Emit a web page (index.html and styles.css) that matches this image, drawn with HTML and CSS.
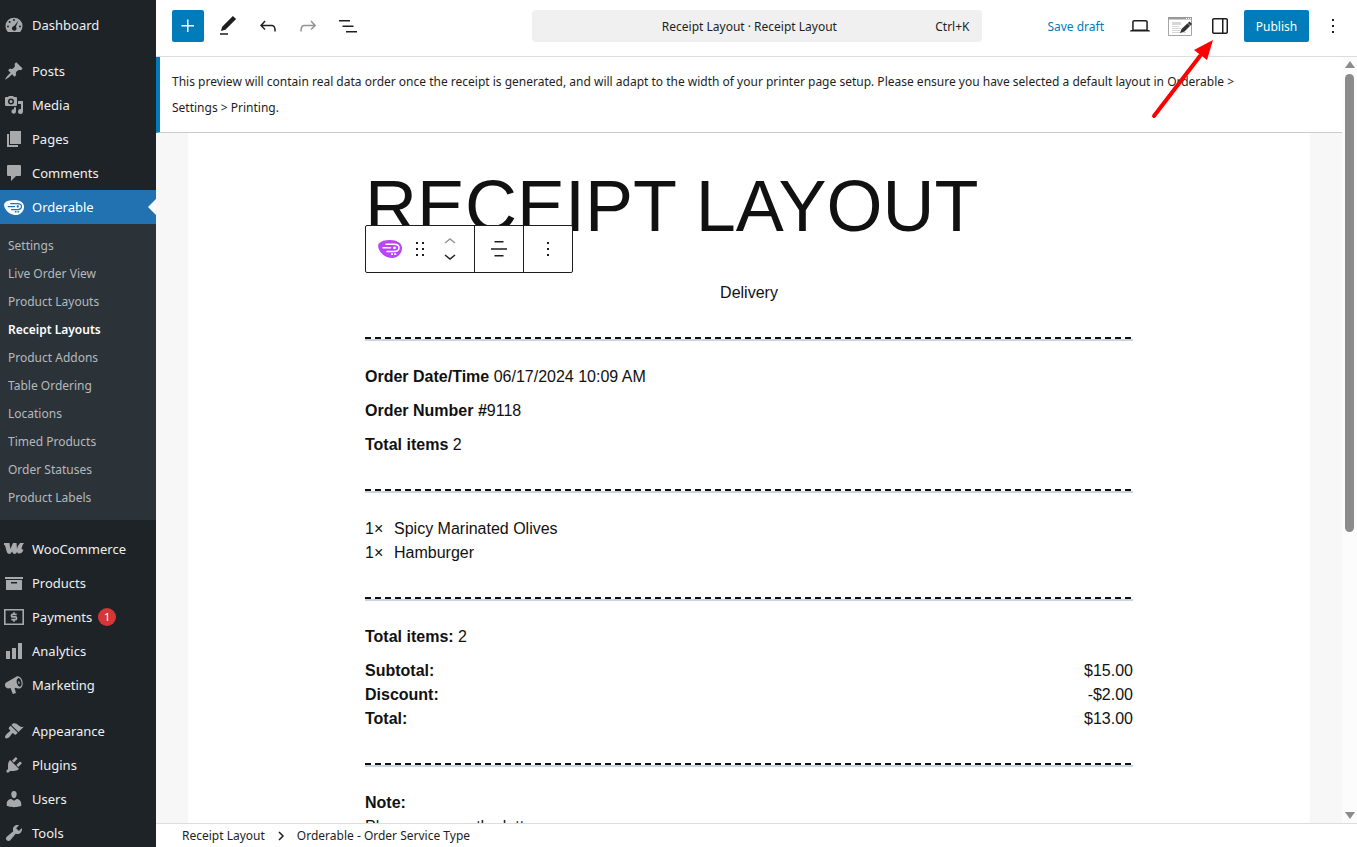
FILE: index.html
```
<!DOCTYPE html>
<html lang="en">
<head>
    <meta charset="UTF-8">
    <meta name="viewport" content="width=device-width, initial-scale=1.0">
    <title>Receipt Layout</title>
    <link rel="stylesheet" href="styles.css">
</head>
<body>
    <svg class="sprite" aria-hidden="true">
        <symbol id="logo" viewBox="0 0 24 18">
            <path fill="currentColor" d="M.8 3.500C3 1 7 0 12 0c7 0 12 3 12 8 0 6-5 10-9.500 10C9 18 4 15 1.500 10.500 0 8-.3 5 .8 3.500z"/>
            <path class="logo-line" fill="none" stroke-width="1.500" stroke-linecap="round" d="M8 4.200h8c3 0 5 1.400 5 3.600s-2 3.700-5 3.700H9M5 7.800h7.500"/>
            <circle class="logo-dot" cx="16.500" cy="7.800" r="1.400"/>
            <path class="logo-dot" d="M13 13.300h2V15h-2zM16.200 13.300h2V15h-2z"/>
        </symbol>
    </svg>
    <div class="admin">
        <nav class="sidebar">
            <a class="menu-item" href="#"><svg class="menu-icon" viewBox="0 0 20 20"><path fill-rule="evenodd" d="M3.800 17h12.400a8.500 8.500 0 1 0-12.400 0zM10 4a1 1 0 1 1 0 2 1 1 0 0 1 0-2zM5.600 6a1 1 0 1 1 0 2 1 1 0 0 1 0-2zM4 10.400a1 1 0 1 1 0 2 1 1 0 0 1 0-2zM16 10.400a1 1 0 1 1 0 2 1 1 0 0 1 0-2zM14.500 5.500l-2.600 6.300a2.300 2.300 0 1 1-1.700-.7z"/></svg>Dashboard</a>
            <div class="menu-gap"></div>
            <a class="menu-item" href="#"><svg class="menu-icon" viewBox="0 0 20 20"><path d="M10.440 3.020l1.820-1.820 6.360 6.350-1.830 1.820c-1.050-.68-2.480-.57-3.410.36l-.75.750c-.92.930-1.040 2.350-.35 3.410l-1.830 1.820-2.410-2.410-2.800 2.790c-.42.420-3.380 2.710-3.800 2.290s1.860-3.390 2.280-3.810l2.790-2.790L4.100 9.360l1.830-1.820c1.050.69 2.480.57 3.400-.36l.75-.75c.93-.92 1.050-2.350.36-3.410z"/></svg>Posts</a>
            <a class="menu-item" href="#"><svg class="menu-icon" viewBox="0 0 20 20"><path fill-rule="evenodd" d="M2 2h2l1-1h4l1 1h2q1 0 1 1v7q0 1-1 1H2q-1 0-1-1V3q0-1 1-1zM7 3.500a3 3 0 1 0 0 6 3 3 0 0 0 0-6zM7 5a1.500 1.500 0 1 1 0 3 1.500 1.500 0 0 1 0-3zM14 6h5v10.500a2.500 2.500 0 1 1-2-2.450V9h-3zM10 12.200h2v4.300a2.300 2.300 0 1 1-2-2.300z"/></svg>Media</a>
            <a class="menu-item" href="#"><svg class="menu-icon" viewBox="0 0 20 20"><path d="M6 2h11v13H6zM3 5h2v11h9v2H3z"/></svg>Pages</a>
            <a class="menu-item" href="#"><svg class="menu-icon" viewBox="0 0 20 20"><path d="M4 2h12q1 0 1 1v9q0 1-1 1h-4l-5 5v-5H4q-1 0-1-1V3q0-1 1-1z"/></svg>Comments</a>
            <a class="menu-item current" href="#"><svg class="menu-logo"><use href="#logo"/></svg>Orderable</a>
            <div class="submenu">
                <a href="#">Settings</a>
                <a href="#">Live Order View</a>
                <a href="#">Product Layouts</a>
                <a class="active" href="#">Receipt Layouts</a>
                <a href="#">Product Addons</a>
                <a href="#">Table Ordering</a>
                <a href="#">Locations</a>
                <a href="#">Timed Products</a>
                <a href="#">Order Statuses</a>
                <a href="#">Product Labels</a>
            </div>
            <div class="menu-gap"></div>
            <a class="menu-item" href="#"><svg class="menu-icon" viewBox="0 0 20 20"><path d="M0 4h5.500l.8 6L9 4h3.500l.5 6q1-4 3-6h4q-2 2-2.500 5.500.5 1.500 2 1-1 4-4.500 4-1.500 0-2-1.500-.8 2-2.500 2-1.800 0-2.300-2.500Q6.500 15 5 15q-1.800 0-2.500-3L1.200 7Q1 6 0 6z"/></svg>WooCommerce</a>
            <a class="menu-item" href="#"><svg class="menu-icon" viewBox="0 0 20 20"><path fill-rule="evenodd" d="M1 4h18v2H1zM2 7h16v10H2zM7 9v1.500h6V9z"/></svg>Products</a>
            <a class="menu-item" href="#"><svg class="menu-icon" viewBox="0 0 20 20"><path fill="none" stroke="currentColor" stroke-width="1.600" d="M.8 2.800h18.400v14.400H.8z"/><path fill="none" stroke="currentColor" stroke-width="1.700" d="M12.700 7.300H8.500q-1 0-1 1v.6q0 1 1 1h3q1 0 1 1v.7q0 1-1 1H7.300M10 5.200v2M10 12.800v2"/></svg>Payments<span class="count">1</span></a>
            <a class="menu-item" href="#"><svg class="menu-icon" viewBox="0 0 20 20"><path d="M2 10h4v8H2zM8 7h4v11H8zM14 2h4v16h-4z"/></svg>Analytics</a>
            <a class="menu-item" href="#"><svg class="menu-icon" viewBox="0 0 20 20"><path fill-rule="evenodd" d="M11 2.500C13 .5 16 .8 17.700 4.200c2 4.300.8 8.800-2.200 9.300-1 .2-3-.6-5-.8L12 18l-3.200 1-2.300-6C3.500 14 2 13 1.300 11.500.5 9.500 1 8 3 7zM14.500 3c-1.800.5-2.300 3-1.500 5.500.7 2.300 2 3.500 3.300 3.100 1.400-.5 1.700-3 .9-5.300-.6-2.200-1.600-3.500-2.700-3.300zM14 6q1.800 0 1.800 2.800L14.500 9z"/></svg>Marketing</a>
            <div class="menu-gap"></div>
            <a class="menu-item" href="#"><svg class="menu-icon" viewBox="0 0 20 20"><path d="M14.480 11.060L7.410 3.990l1.500-1.500c.5-.56 2.300-.47 3.510.32 1.210.8 1.430 1.280 2.910 2.100 1.180.64 2.450 1.260 4.450.85zm-.71.710L6.700 4.700 4.930 6.470c-.39.390-.39 1.020 0 1.410l1.060 1.060c.39.390.39 1.030 0 1.420-.6.600-1.430 1.110-2.210 1.690-.35.260-.7.530-1.010.840C1.430 14.230.4 16.080 1.400 17.070c.99 1 2.840-.03 4.180-1.360.31-.31.580-.66.850-1.020.57-.78 1.080-1.610 1.690-2.210.39-.39 1.020-.39 1.410 0l1.060 1.060c.39.390 1.020.39 1.410 0z"/></svg>Appearance</a>
            <a class="menu-item" href="#"><svg class="menu-icon" viewBox="0 0 20 20"><path d="M13.110 4.360L9.870 7.600 8 5.730l3.240-3.240c.35-.34 1.050-.2 1.560.32.520.51.660 1.210.31 1.550zm-8 1.770l.91-1.120 9.010 9.010-1.190.84c-.71.710-2.630 1.160-3.820 1.160H6.140L4.900 17.260c-.59.590-1.540.59-2.120 0-.59-.58-.59-1.530 0-2.120l1.240-1.240v-3.880c0-1.130.4-3.190 1.090-3.890zm7.260 3.970l3.240-3.240c.34-.35 1.040-.21 1.550.31.520.51.660 1.210.31 1.550l-3.240 3.250z"/></svg>Plugins</a>
            <a class="menu-item" href="#"><svg class="menu-icon" viewBox="0 0 20 20"><path d="M10 9.250c-2.270 0-2.730-3.440-2.730-3.440C7 4.020 7.820 2 9.970 2c2.160 0 2.980 2.020 2.710 3.810 0 0-.41 3.440-2.680 3.440zm0 2.570L12.720 10c2.390 0 4.520 2.330 4.520 4.530v2.490s-3.650 1.130-7.240 1.130c-3.650 0-7.240-1.130-7.240-1.130v-2.490c0-2.250 1.940-4.480 4.470-4.480z"/></svg>Users</a>
            <a class="menu-item" href="#"><svg class="menu-icon" viewBox="0 0 20 20"><path d="M16.680 9.770c-1.340 1.340-3.300 1.670-4.950.99l-5.410 6.520c-.99.990-2.590.99-3.580 0s-.99-2.590 0-3.570l6.520-5.420c-.68-1.650-.35-3.610.99-4.950 1.280-1.280 3.120-1.620 4.720-1.060l-2.890 2.890 2.820 2.820 2.860-2.870c.53 1.580.18 3.390-1.080 4.650z"/></svg>Tools</a>
        </nav>

        <div class="editor">
            <header class="topbar">
                <div class="tools">
                    <button class="tool add" aria-label="Add block"><svg viewBox="0 0 24 24"><path d="M11 12.500V18h1.500v-5.500H18V11h-5.500V5.500H11V11H5.500v1.500z"/></svg></button>
                    <button class="tool" aria-label="Edit"><svg viewBox="0 0 24 24"><path d="M20.100 5.100L16.900 2 6.200 12.700l-1.300 4.400 4.500-1.300L20.100 5.100zM4 20.800h8v-1.500H4v1.500z"/></svg></button>
                    <button class="tool" aria-label="Undo"><svg viewBox="0 0 24 24"><path d="M18.300 11.700c-.6-.6-1.400-.9-2.300-.9H6.700l2.900-3.300-1.100-1-4.500 5L8.500 16l1-1-2.700-2.700H16c.5 0 .9.200 1.300.5 1 1 1 3.400 1 4.500v.3h1.500v-.2c0-1.500 0-4.300-1.500-5.700z"/></svg></button>
                    <button class="tool" aria-label="Redo" disabled><svg viewBox="0 0 24 24"><path d="M15.600 6.500l-1.100 1 2.900 3.300H8c-.9 0-1.700.3-2.300.9-1.400 1.500-1.400 4.200-1.400 5.600v.2h1.500v-.3c0-1.100 0-3.500 1-4.500.3-.3.700-.5 1.300-.5h9.200L14.500 15l1.100 1.100 4.600-4.600-4.600-5z"/></svg></button>
                    <button class="tool" aria-label="Document overview"><svg viewBox="0 0 24 24"><path d="M3 6h11v1.500H3V6zm3.500 5.500h11V13h-11v-1.500zM21 17H10v1.500h11V17z"/></svg></button>
                </div>
                <button class="command"><span class="command-title">Receipt Layout · Receipt Layout</span><span>Ctrl+K</span></button>
                <div class="actions">
                    <button class="save">Save draft</button>
                    <button class="tool" aria-label="View"><svg viewBox="0 0 24 24"><path d="M20.500 16h-.7V8c0-1.100-.9-2-2-2H6.200c-1.100 0-2 .9-2 2v8h-.7c-.8 0-1.500.7-1.500 1.500h20c0-.8-.7-1.500-1.500-1.500zM5.700 8c0-.3.2-.5.500-.5h11.600c.3 0 .5.200.5.500v7.600H5.700V8z"/></svg></button>
                    <button class="tool" aria-label="Edit template"><svg class="template-icon" viewBox="0 0 24 19"><path fill="#fff" stroke="#a5a5a5" d="M.5.500h23v18H.5z"/><path fill="#999" d="M0 0h24v2.500H0z"/><path fill="#fff" d="M18 1h1v1h-1zM20 1h1v1h-1zM22 1h1v1h-1z"/><path fill="#d6d6d6" d="M4 5h9v3H4zM4 9h7v1H4zM4 11h9v1H4zM4 13h8v1H4zM4 15h14v1H4z"/><path fill="#333" d="M21.500 4.500L24 7l-7.500 7.500L12 16l1.500-4z"/><path stroke="#ccc" stroke-width=".8" d="M19.500 6l3 3"/></svg></button>
                    <button class="tool" aria-label="Settings"><svg viewBox="0 0 24 24"><path fill-rule="evenodd" d="M18 4H6c-1.100 0-2 .9-2 2v12c0 1.100.9 2 2 2h12c1.100 0 2-.9 2-2V6c0-1.100-.9-2-2-2zm-4 14.500H6c-.3 0-.5-.2-.5-.5V6c0-.3.200-.5.500-.5h8v13zm4.500-.5c0 .3-.2.500-.5.500h-2.500v-13H18c.3 0 .5.200.5.500v12z"/></svg></button>
                    <button class="publish">Publish</button>
                    <button class="tool" aria-label="Options"><svg viewBox="0 0 24 24"><path d="M13 19h-2v-2h2v2zm0-6h-2v-2h2v2zm0-6h-2V5h2v2z"/></svg></button>
                </div>
                <svg class="pointer" viewBox="0 0 64 80"><path stroke="#f00" stroke-width="4" stroke-linecap="round" d="M4 76L50 16"/><path fill="#f00" d="M63 0L44 10l13 10z"/></svg>
            </header>

            <div class="workspace">
                <div class="content">
                    <div class="notice">This preview will contain real data order once the receipt is generated, and will adapt to the width of your printer page setup. Please ensure you have selected a default layout in Orderable &gt; Settings &gt; Printing.</div>
                    <div class="canvas">
                        <main class="receipt">
                            <h1>RECEIPT LAYOUT</h1>
                            <div class="block-toolbar">
                                <div class="group first">
                                    <svg class="block-logo"><use href="#logo"/></svg>
                                    <svg class="drag" viewBox="0 0 24 24"><path d="M8 7h2V5H8v2zm0 6h2v-2H8v2zm0 6h2v-2H8v2zm6-14v2h2V5h-2zm0 8h2v-2h-2v2zm0 6h2v-2h-2v2z"/></svg>
                                    <div class="movers">
                                        <button aria-label="Move up" disabled><svg viewBox="0 0 12 8"><path d="M1 6l5-4 5 4"/></svg></button>
                                        <button aria-label="Move down"><svg viewBox="0 0 12 8"><path d="M1 2l5 4 5-4"/></svg></button>
                                    </div>
                                </div>
                                <button class="group" aria-label="Align"><svg viewBox="0 0 24 24"><path d="M7.500 4h9v1.500h-9zM4 11.200h16v1.500H4zM7.500 18h9v1.500h-9z"/></svg></button>
                                <button class="group" aria-label="Options"><svg viewBox="0 0 24 24"><path d="M13 19h-2v-2h2v2zm0-6h-2v-2h2v2zm0-6h-2V5h2v2z"/></svg></button>
                            </div>
                            <p class="service">Delivery</p>
                            <div class="divider"></div>
                            <p><b>Order Date/Time</b> 06/17/2024 10:09 AM</p>
                            <p><b>Order Number #</b>9118</p>
                            <p><b>Total items</b> 2</p>
                            <div class="divider"></div>
                            <div class="line"><span class="qty">1×</span>Spicy Marinated Olives</div>
                            <div class="line"><span class="qty">1×</span>Hamburger</div>
                            <div class="divider"></div>
                            <p><b>Total items:</b> 2</p>
                            <div class="line total"><b>Subtotal:</b><span>$15.00</span></div>
                            <div class="line total"><b>Discount:</b><span>-$2.00</span></div>
                            <div class="line total"><b>Total:</b><span>$13.00</span></div>
                            <div class="divider"></div>
                            <div class="line"><b>Note:</b></div>
                            <div class="line">Please remove the lettuce</div>
                        </main>
                    </div>
                </div>
                <div class="scrollbar">
                    <svg viewBox="0 0 10 8"><path d="M5 0l5 7H0z"/></svg>
                    <div class="track"><div class="thumb"></div></div>
                    <svg viewBox="0 0 10 8"><path d="M0 1h10L5 8z"/></svg>
                </div>
            </div>

            <footer class="breadcrumb">
                <a href="#">Receipt Layout</a>
                <svg viewBox="0 0 8 10"><path d="M2 1l4 4-4 4"/></svg>
                <span>Orderable - Order Service Type</span>
            </footer>
        </div>
    </div>
</body>
</html>
```
FILE: styles.css
```
* {
    box-sizing: border-box;
}
body {
    margin: 0;
    font-family: "Noto Sans", "Open Sans", sans-serif;
    font-size: 12px;
    color: #1e1e1e;
    background: #fff;
}
a {
    color: inherit;
    text-decoration: none;
}
button {
    margin: 0;
    padding: 0;
    border: none;
    background: none;
    color: inherit;
    font: inherit;
    cursor: pointer;
}
svg {
    display: block;
    flex: none;
    fill: currentColor;
}
.sprite {
    position: absolute;
    width: 0;
    height: 0;
}
.admin {
    display: flex;
    height: 100vh;
    overflow: hidden;
}

/* admin menu */
.sidebar {
    flex: none;
    width: 156px;
    padding-top: 8px;
    overflow: hidden;
    background: #1d2327;
    color: #f0f0f1;
    font-size: 13px;
}
.menu-item {
    display: flex;
    align-items: center;
    height: 34px;
    padding-left: 4px;
    position: relative;
}
.menu-icon,
.menu-logo {
    width: 20px;
    height: 20px;
    margin-right: 8px;
    color: #a7aaad;
}
.menu-logo {
    height: 15px;
    color: #fff;
    --logo-mark: #2271b1;
}
.block-logo {
    --logo-mark: #fff;
}
.logo-line {
    stroke: var(--logo-mark);
}
.logo-dot {
    fill: var(--logo-mark);
}
.menu-gap {
    height: 12px;
}
.current {
    background: #2271b1;
    color: #fff;
}
.current::after {
    content: "";
    position: absolute;
    right: 0;
    top: 9px;
    border: 8px solid transparent;
    border-left: none;
    border-right-color: #fff;
}
.submenu {
    padding: 8px 0;
    background: #2c3338;
    color: #b4b9be;
    font-size: 12px;
}
.submenu a {
    display: block;
    padding-left: 8px;
    line-height: 28px;
}
.submenu .active {
    color: #fff;
    font-weight: 600;
}
.count {
    width: 18px;
    height: 18px;
    margin-left: 6px;
    border-radius: 9px;
    background: #d63638;
    color: #fff;
    font-size: 11px;
    line-height: 18px;
    text-align: center;
}

/* top bar */
.editor {
    flex: 1;
    min-width: 0;
    display: flex;
    flex-direction: column;
}
.topbar {
    flex: none;
    position: relative;
    display: flex;
    align-items: center;
    justify-content: space-between;
    height: 57px;
    padding: 0 8px 4px 16px;
    border-bottom: 1px solid #ddd;
}
.tools,
.actions {
    flex: 1;
    display: flex;
    align-items: center;
    gap: 8px;
}
.actions {
    justify-content: flex-end;
}
.tool {
    display: flex;
    align-items: center;
    justify-content: center;
    width: 32px;
    height: 32px;
}
.tool svg {
    width: 24px;
    height: 24px;
}
.tool:disabled {
    color: #949494;
}
.tool .template-icon {
    height: 19px;
}
.add,
.publish {
    border-radius: 2px;
    background: #007cba;
    color: #fff;
}
.command {
    display: flex;
    align-items: center;
    width: 450px;
    height: 32px;
    margin-right: 8px;
    padding: 0 12px;
    border-radius: 4px;
    background: #f0f0f0;
}
.command-title {
    flex: 1;
    padding-left: 20px;
}
.save {
    padding: 0 12px;
    color: #007cba;
}
.publish {
    width: 65px;
    height: 32px;
}
.pointer {
    position: absolute;
    right: 143px;
    top: 40px;
    width: 64px;
    height: 80px;
    z-index: 2;
}

/* preview */
.workspace {
    flex: 1;
    min-height: 0;
    display: flex;
}
.content {
    flex: 1;
    min-width: 0;
    display: flex;
    flex-direction: column;
}
.notice {
    padding: 12px 72px 11px 12px;
    border-left: 4px solid #007cba;
    border-bottom: 1px solid #ccc;
    line-height: 26px;
}
.canvas {
    flex: 1;
    min-height: 0;
    padding: 0 32px;
    overflow: hidden;
    background: #f7f7f7;
}
.receipt {
    position: relative;
    min-height: 100%;
    padding: 32px calc(50% - 384px);
    background: #fff;
    color: #111;
    font-family: "Liberation Sans", Arial, sans-serif;
    font-size: 16px;
    line-height: 24px;
}
.receipt h1 {
    margin: 0;
    font-size: 72px;
    font-weight: 400;
    line-height: 82px;
}
.receipt p {
    margin: 0 0 10px;
}
.receipt .service {
    margin: 34px 0 32px;
    text-align: center;
}
.divider {
    height: 4px;
    margin: 32px 0 24px;
    border-bottom: 2px solid #cbd5e1;
    background: repeating-linear-gradient(90deg, #111 0 6px, #fff 6px 10px);
}
.line {
    display: flex;
}
.qty {
    width: 29px;
}
.total {
    justify-content: space-between;
}
.block-toolbar {
    position: absolute;
    top: 92px;
    left: calc(50% - 384px);
    display: flex;
    height: 48px;
    border: 1px solid #1e1e1e;
    border-radius: 2px;
    background: #fff;
    color: #1e1e1e;
}
.group {
    display: flex;
    align-items: center;
    justify-content: center;
    width: 49px;
}
.group svg {
    width: 24px;
    height: 24px;
}
.group + .group {
    border-left: 1px solid #1e1e1e;
}
.first {
    width: 108px;
    gap: 6px;
}
.first .block-logo {
    height: 18px;
    color: #b846f5;
}
.movers {
    display: flex;
    flex-direction: column;
    gap: 8px;
    padding: 0 6px;
}
.movers svg {
    width: 12px;
    height: 8px;
    fill: none;
    stroke: currentColor;
    stroke-width: 1.5;
}
.movers button:disabled {
    color: #949494;
}

/* scrollbar */
.scrollbar {
    flex: none;
    display: flex;
    flex-direction: column;
    align-items: center;
    width: 15px;
    padding: 4px 0;
    background: #fcfcfc;
    color: #8b8b8b;
}
.scrollbar svg {
    width: 10px;
    height: 8px;
}
.track {
    flex: 1;
    padding: 5px 0;
}
.thumb {
    width: 9px;
    height: 62.5%;
    border-radius: 5px;
    background: #8b8b8b;
}

/* breadcrumb */
.breadcrumb {
    flex: none;
    display: flex;
    align-items: center;
    gap: 12px;
    height: 24px;
    padding: 0 26px;
    border-top: 1px solid #ddd;
}
.breadcrumb svg {
    width: 8px;
    height: 10px;
    fill: none;
    stroke: currentColor;
    stroke-width: 1.5;
}
```
